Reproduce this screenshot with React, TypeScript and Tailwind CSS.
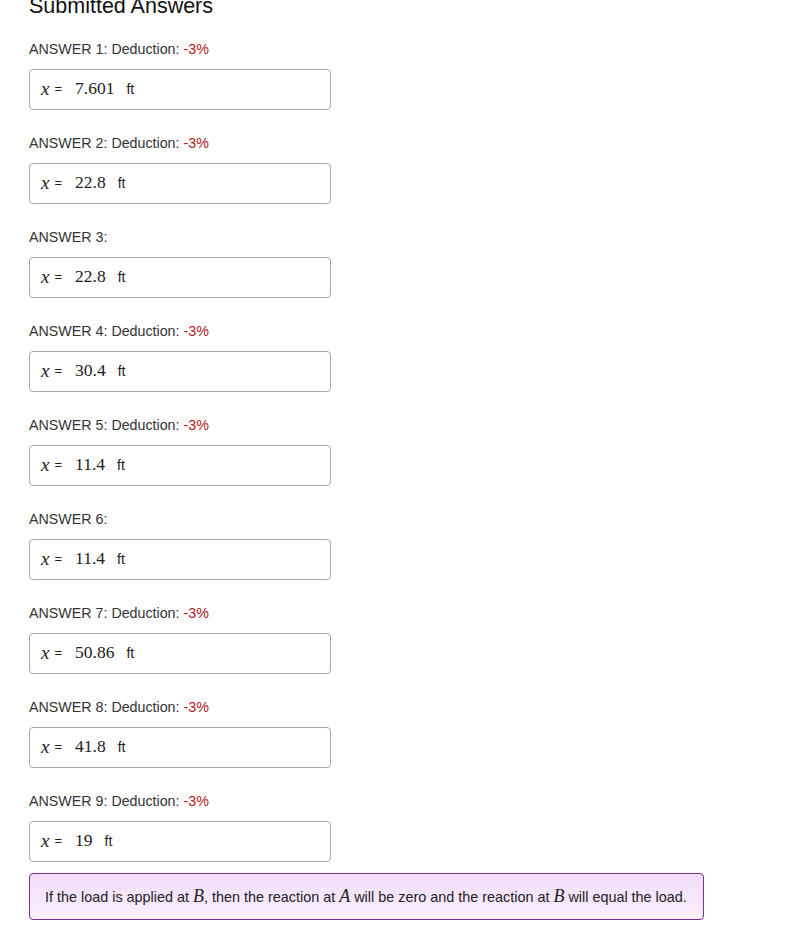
import React from "react";

const answers: { n: number; ded: boolean; v: string }[] = [
  { n: 1, ded: true, v: "7.601" },
  { n: 2, ded: true, v: "22.8" },
  { n: 3, ded: false, v: "22.8" },
  { n: 4, ded: true, v: "30.4" },
  { n: 5, ded: true, v: "11.4" },
  { n: 6, ded: false, v: "11.4" },
  { n: 7, ded: true, v: "50.86" },
  { n: 8, ded: true, v: "41.8" },
  { n: 9, ded: true, v: "19" },
];

const serif = { fontFamily: '"Liberation Serif", "DejaVu Serif", serif' };

export default function App() {
  return (
    <div
      className="w-[789px] h-[937px] overflow-hidden bg-white px-[29px]"
      style={{ fontFamily: '"Liberation Sans", Arial, sans-serif' }}
    >
      <div className="-mt-[6px] text-[21.5px] leading-[24px] text-[#111]">Submitted Answers</div>
      <div className="mt-[22px] flex flex-col gap-[24px]">
        {answers.map((a) => (
          <div key={a.n} className="flex flex-col gap-[12px]">
            <div className="pt-[1px] text-[14.25px] leading-[16px] text-[#333]">
              ANSWER {a.n}:{a.ded ? " Deduction: " : ""}
              {a.ded && <span className="text-[#b0141a]">-3%</span>}
            </div>
            <div className="w-[302px] h-[41px] border border-[#a8a8a8] rounded-[4px] flex items-center pl-[11px] pb-[2px] text-[#222] leading-none">
              <span className="italic text-[19px]" style={serif}>x</span>
              <span className="text-[13px] ml-[5px]">=</span>
              <span className="text-[17.5px] ml-[13px]" style={serif}>{a.v}</span>
              <span className="text-[14px] ml-[12px]">ft</span>
            </div>
          </div>
        ))}
      </div>
      <div className="mt-[11px] w-[675px] h-[47px] rounded-[4px] border border-[#6e3490] bg-gradient-to-b from-[#f1dcfb] to-[#fbf0fd] flex items-center pl-[15px] text-[14.4px] leading-[18px] text-[#222]">
        <span>
          If the load is applied at{" "}
          <span className="italic text-[18px] leading-none" style={serif}>B</span>, then the reaction at{" "}
          <span className="italic text-[18px] leading-none" style={serif}>A</span> will be zero and the reaction at{" "}
          <span className="italic text-[18px] leading-none" style={serif}>B</span> will equal the load.
        </span>
      </div>
    </div>
  );
}
